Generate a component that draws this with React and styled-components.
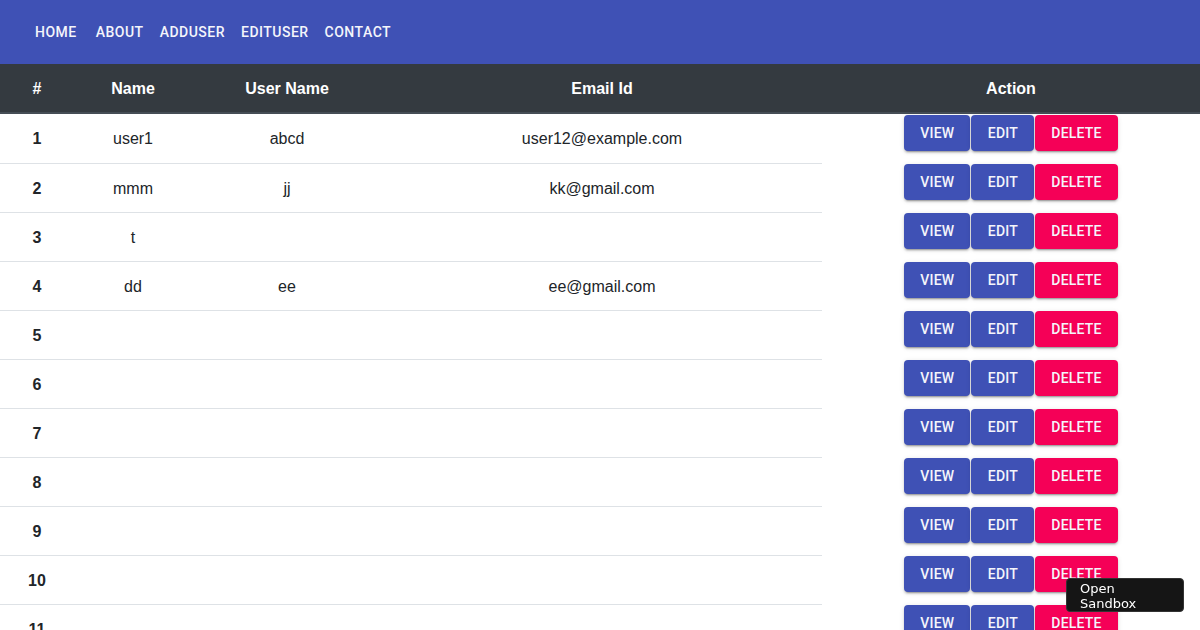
import React from "react";
import styled, { createGlobalStyle } from "styled-components";

const GlobalStyle = createGlobalStyle`
  body {
    margin: 0;
    font-family: "Liberation Sans", Arial, sans-serif;
    color: #212529;
    background: #fff;
  }
`;

const users = [
  { id: 1, name: "user1", username: "abcd", email: "user12@example.com" },
  { id: 2, name: "mmm", username: "jj", email: "kk@gmail.com" },
  { id: 3, name: "t", username: "", email: "" },
  { id: 4, name: "dd", username: "ee", email: "ee@gmail.com" },
  { id: 5, name: "", username: "", email: "" },
  { id: 6, name: "", username: "", email: "" },
  { id: 7, name: "", username: "", email: "" },
  { id: 8, name: "", username: "", email: "" },
  { id: 9, name: "", username: "", email: "" },
  { id: 10, name: "", username: "", email: "" },
  { id: 11, name: "", username: "", email: "" },
  { id: 12, name: "", username: "", email: "" },
];

const links = ["Home", "About", "AddUser", "EditUser", "Contact"];

const App = () => {
  return (
    <>
      <GlobalStyle />
      <AppBar>
        {links.map((l) => (
          <NavLink key={l}>{l}</NavLink>
        ))}
      </AppBar>
      <Table>
        <colgroup>
          <col style={{ width: 74 }} />
          <col style={{ width: 118 }} />
          <col style={{ width: 190 }} />
          <col style={{ width: 440 }} />
          <col />
        </colgroup>
        <thead>
          <tr>
            <Th>#</Th>
            <Th>Name</Th>
            <Th>User Name</Th>
            <Th>Email Id</Th>
            <Th>Action</Th>
          </tr>
        </thead>
        <tbody>
          {users.map((u) => (
            <tr key={u.id}>
              <RowHead>{u.id}</RowHead>
              <Td>{u.name}</Td>
              <Td>{u.username}</Td>
              <Td>{u.email}</Td>
              <ActionCell>
                <Actions>
                  <Button>View</Button>
                  <Button>Edit</Button>
                  <Button $danger>Delete</Button>
                </Actions>
              </ActionCell>
            </tr>
          ))}
        </tbody>
      </Table>
      <SandboxBadge>Open Sandbox</SandboxBadge>
    </>
  );
};

const AppBar = styled.header`
  height: 64px;
  background-color: #3f51b5;
  display: flex;
  align-items: center;
  padding-left: 35px;
  box-shadow: 0 2px 4px -1px rgba(0, 0, 0, 0.2), 0 4px 5px 0 rgba(0, 0, 0, 0.14);
`;

const NavLink = styled.a`
  font-family: Roboto, "Liberation Sans", sans-serif;
  font-weight: 500;
  font-size: 14px;
  letter-spacing: 0.035em;
  text-transform: uppercase;
  color: #f4f5fb;
  margin-right: 16px;
  cursor: pointer;

  &:first-child {
    margin-right: 19px;
  }
`;

const Table = styled.table`
  width: 100%;
  border-collapse: collapse;
  table-layout: fixed;
  font-size: 16px;
  line-height: 24px;
`;

const Th = styled.th`
  background-color: #343a40;
  color: #fff;
  padding: 13px 12px 11px;
  border-bottom: 2px solid #454d55;
  font-weight: bold;
  text-align: center;
`;

const Td = styled.td`
  padding: 13px 12px 11px;
  text-align: center;
  border-bottom: 1px solid #dee2e6;
`;

const RowHead = styled(Td).attrs({ as: "th" })`
  font-weight: bold;
`;

const ActionCell = styled.td`
  padding: 1px 0 0;
  vertical-align: top;
  height: 48px;
`;

const Actions = styled.div`
  display: flex;
  justify-content: center;
  gap: 1px;
`;

const Button = styled.button`
  font-family: Roboto, "Liberation Sans", sans-serif;
  font-weight: 500;
  font-size: 14px;
  line-height: 24px;
  letter-spacing: 0.015em;
  text-transform: uppercase;
  color: #f4f5fb;
  background-color: ${(p) => (p.$danger ? "#f50057" : "#3f51b5")};
  border: none;
  border-radius: 4px;
  padding: 6px 16px;
  min-width: 63px;
  box-shadow: 0 3px 1px -2px rgba(0, 0, 0, 0.2), 0 2px 2px 0 rgba(0, 0, 0, 0.14),
    0 1px 5px 0 rgba(0, 0, 0, 0.12);
  cursor: pointer;
`;

const SandboxBadge = styled.div`
  position: fixed;
  right: 16px;
  bottom: 18px;
  width: 90px;
  padding: 2px 13px 0;
  background-color: #151515;
  border: 1px solid #333;
  border-radius: 4px;
  color: #fff;
  font-family: "DejaVu Sans", sans-serif;
  font-size: 13px;
  line-height: 15px;
`;

export default App;
